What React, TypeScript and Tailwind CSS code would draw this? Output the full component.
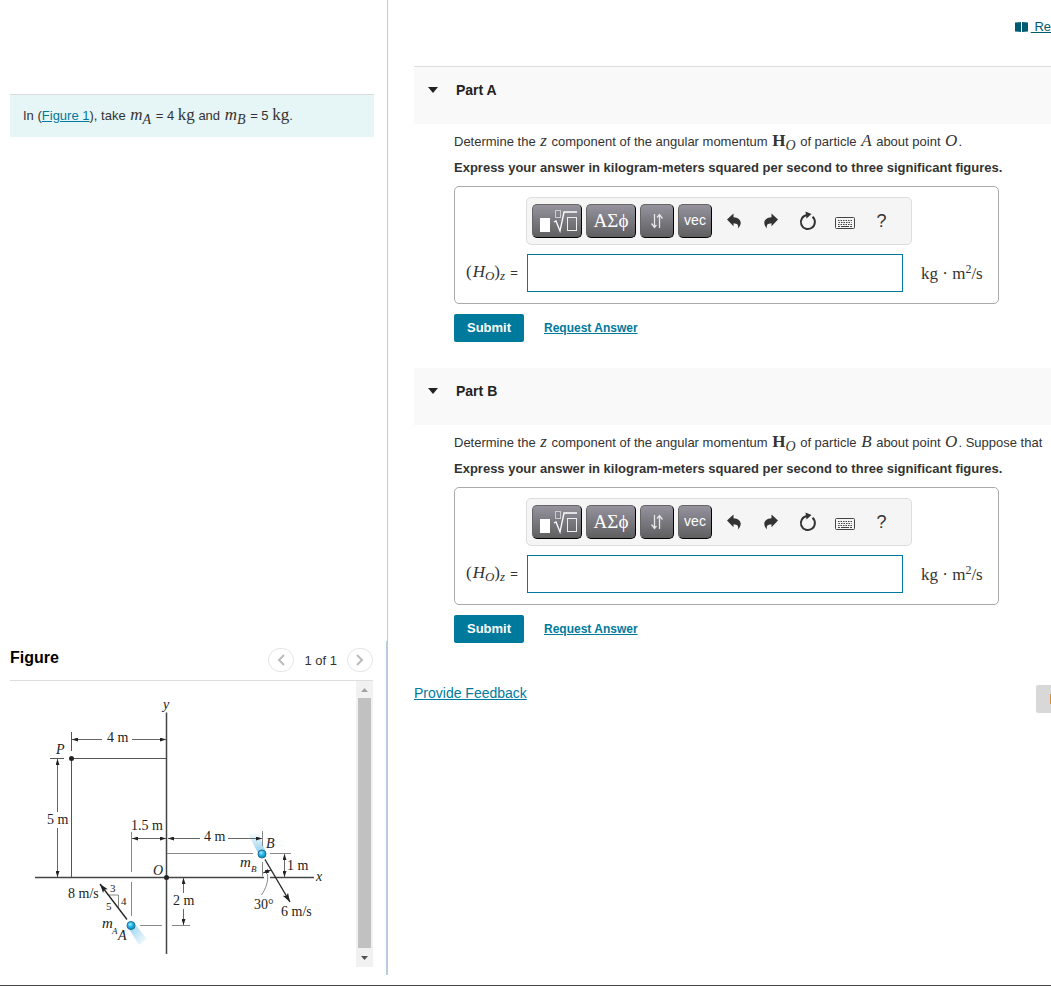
import { ReactNode } from "react";
import clsx from "clsx";

const serif = "font-['Liberation_Serif',serif]";

function Sym({ children, sub, bold }: { children: ReactNode; sub?: string; bold?: boolean }) {
    return (
        <span className={clsx(serif, "px-px text-[17px] leading-none")}>
            <span className={bold ? "font-bold" : "italic"}>{children}</span>
            {sub && <sub className="bottom-[-4px] text-[14px] italic">{sub}</sub>}
        </span>
    );
}

function TemplateIcon() {
    return (
        <svg width="40" height="26" viewBox="0 0 40 26" fill="none" aria-hidden="true">
            <rect x="3" y="10" width="10" height="14" fill="#fff" />
            <rect x="18.5" y="2.5" width="5" height="7" stroke="#ccc" />
            <path d="M17 14l2-1 4 10 4-19h13" stroke="#fff" strokeWidth="1.3" />
            <rect x="30.5" y="9.5" width="9" height="13" stroke="#eee" />
        </svg>
    );
}

function ArrowsIcon() {
    return (
        <svg width="14" height="18" viewBox="0 0 14 18" fill="none" stroke="#e6e6e6" strokeWidth="1.3" aria-hidden="true">
            <path d="M4.500 2v13M1.500 11.500l3 4 2-2.500M9.500 16V3M7 5.500l2.500-3 3 4" />
        </svg>
    );
}

function UndoIcon({ flip }: { flip?: boolean }) {
    return (
        <svg width="14" height="16" viewBox="0 0 14 16" className={flip ? "-scale-x-100" : ""} fill="#333" aria-hidden="true">
            <path d="M0 6.500L6.500 .5v3.700c4.500.3 7 2.300 7.200 5.300.1 2-.8 4-2.700 6 .7-3.500-.5-5-4.500-5.200v3z" />
        </svg>
    );
}

function ResetIcon() {
    return (
        <svg width="18" height="20" viewBox="0 0 18 20" fill="none" aria-hidden="true">
            <path d="M13.500 5.800A7 7 0 1 1 8 4.100" stroke="#333" strokeWidth="2" />
            <path d="M6.500 .5l6 2.500-5 4.500z" fill="#333" />
        </svg>
    );
}

function KeyboardIcon() {
    return (
        <svg width="20" height="13" viewBox="0 0 20 13" fill="none" stroke="#444" aria-hidden="true">
            <rect x=".5" y=".5" width="19" height="11" rx="1" />
            <path d="M3 3.500h14M3.500 5.500h13M3 7.500h14" strokeDasharray="1.500 1" />
            <path d="M3 9.500h2m1 0h8m1 0h2" />
        </svg>
    );
}

const darkBtn =
    "flex h-[34px] items-center justify-center rounded-[5px] border border-t-[#666] border-l-[#666] border-r-black border-b-black bg-linear-to-b from-[#96939e] to-[#5f5f61] text-white";
const plainBtn = "flex h-[34px] w-[33px] items-center justify-center text-[#333]";

function Toolbar() {
    return (
        <div className="col-span-2 col-start-2 flex h-12 w-[386px] items-center gap-1 rounded-[5px] border border-[#ddd] bg-[#f5f5f5] px-[5px]">
            <button aria-label="Templates" className={clsx(darkBtn, "w-[50px]")}>
                <TemplateIcon />
            </button>
            <button aria-label="Symbols" className={clsx(darkBtn, serif, "w-[50px] text-[19px]")}>
                ΑΣϕ
            </button>
            <button aria-label="Arrows" className={clsx(darkBtn, "w-[34px]")}>
                <ArrowsIcon />
            </button>
            <button className={clsx(darkBtn, "w-[34px] pb-[2px] text-sm")}>vec</button>
            <div className="flex gap-1 pl-px">
                <button aria-label="Undo" className={plainBtn}><UndoIcon /></button>
                <button aria-label="Redo" className={plainBtn}><UndoIcon flip /></button>
                <button aria-label="Reset" className={plainBtn}><ResetIcon /></button>
                <button aria-label="Keyboard" className={clsx(plainBtn, "pt-1")}><KeyboardIcon /></button>
                <button aria-label="Help" className={clsx(plainBtn, "text-lg")}>?</button>
            </div>
        </div>
    );
}

function Part({ name, first, tail }: { name: string; first?: boolean; tail?: string }) {
    const id = "answer-" + name;
    return (
        <section className="mb-[26px]">
            <h2 className={clsx("bg-[#f9f9f9]", first && "border-t border-[#ddd]")}>
                <button className="flex h-[57px] w-full items-start pt-3 pl-[14px] text-left text-sm font-bold text-[#222]">
                    <svg width="10" height="6" viewBox="0 0 10 6" className="mt-2 mr-[18px]" aria-hidden="true">
                        <path d="M0 0h10L5 6z" fill="#222" />
                    </svg>
                    <span className="leading-[22px]">Part {name}</span>
                </button>
            </h2>
            <div className="pl-10 text-[13px]">
                <p className="h-[30px] pt-2 leading-5 whitespace-nowrap">
                    Determine the <Sym>z</Sym> component of the angular momentum <Sym bold sub="O">H</Sym> of particle{" "}
                    <Sym>{name}</Sym> about point <Sym>O</Sym>.{tail}
                </p>
                <p className="h-8 pt-1 leading-5 font-bold whitespace-nowrap">
                    Express your answer in kilogram-meters squared per second to three significant figures.
                </p>
                <div className="grid w-[545px] grid-cols-[71px_377px_1fr] gap-y-[9px] rounded-[5px] border border-[#aaa] pt-[10px] pb-[11px]">
                    <Toolbar />
                    <label htmlFor={id} className={clsx(serif, "pt-2 pl-[11px] text-[17px] leading-5 whitespace-nowrap")}>
                        (<i className="pl-px">H</i>
                        <sub className="bottom-[-3px] text-[13px] italic">O</sub>)
                        <sub className="bottom-[-3px] pr-px text-[13px] italic">z</sub>{" "}
                        <span className="font-['Liberation_Sans',sans-serif] text-[13px]">=</span>
                    </label>
                    <input id={id} type="text" className="ml-px h-[38px] border border-[#007a9c] bg-white px-2 outline-none" />
                    <span className={clsx(serif, "pt-[10px] pl-[18px] text-[17px] leading-5")}>
                        kg · m<sup className="-top-[6px] text-[12px]">2</sup>/s
                    </span>
                </div>
                <div className="mt-[10px] flex items-center gap-5">
                    <button className="h-7 w-[70px] rounded-[2px] bg-[#007a9c] text-[13px] font-bold text-white">Submit</button>
                    <a href="#" className="text-xs font-bold text-[#007a9c] underline">Request Answer</a>
                </div>
            </div>
        </section>
    );
}

function Diagram() {
    return (
        <svg viewBox="10 681 346 286" className={clsx(serif, "h-[286px] w-[346px] text-[14px]")} role="img" aria-label="Particles A and B">
            <defs>
                <marker id="tip" viewBox="0 0 6 4" refX="6" refY="2" markerWidth="6" markerHeight="4" orient="auto-start-reverse" markerUnits="userSpaceOnUse">
                    <path d="M0 0l6 2-6 2z" fill="#222" />
                </marker>
                <marker id="bigTip" viewBox="0 0 9 6" refX="9" refY="3" markerWidth="9" markerHeight="7" orient="auto" markerUnits="userSpaceOnUse">
                    <path d="M0 0l9 3-9 3 2-3z" fill="#222" />
                </marker>
                <linearGradient id="trailB" x1="0" y1="1" x2="0" y2="0">
                    <stop stopColor="#8fd0ee" />
                    <stop offset="1" stopColor="#fff" />
                </linearGradient>
                <linearGradient id="trailA" x1="0" y1="0" x2="1" y2="1">
                    <stop stopColor="#8fd0ee" />
                    <stop offset="1" stopColor="#fff" />
                </linearGradient>
                <radialGradient id="ball" cx=".4" cy=".35">
                    <stop stopColor="#a8eafd" />
                    <stop offset=".6" stopColor="#2cb8ea" />
                    <stop offset="1" stopColor="#129bd0" />
                </radialGradient>
            </defs>

            {/* motion trails */}
            <path d="M129 929l5-6 13 16-8 6z" fill="url(#trailA)" />
            <path d="M258 853l7-3-7-18-11 0z" fill="url(#trailB)" />

            {/* axes */}
            <g stroke="#444" strokeWidth="1.500">
                <path d="M166.500 712.500V954M35 877.500H264M270 877.500H314" />
            </g>

            {/* construction lines */}
            <g stroke="#888" strokeWidth="1" fill="none">
                <path d="M71.500 732V751M50 758.500H64M71.500 758.500H166M71.500 758V877" stroke="#555" />
                <path d="M131.500 832V872M131.500 882V916M140 925.500H162M172 925.500H190" />
                <path d="M167 853.500H253M262.500 831V846M262.500 862V876M270 853.500H291" />
                <path d="M108 895H118.500V909" />
                <path d="M267.500 874c1 8-2 15-6 21" />
            </g>

            {/* dimension arrows */}
            <g stroke="#666" strokeWidth="1" fill="none">
                <path d="M102 739.500H72" markerEnd="url(#tip)" />
                <path d="M132 739.500H166" markerEnd="url(#tip)" />
                <path d="M57.500 812V759" markerEnd="url(#tip)" />
                <path d="M57.500 828V877" markerEnd="url(#tip)" />
                <path d="M132 838.500H166" markerStart="url(#tip)" markerEnd="url(#tip)" />
                <path d="M200 838.500H168" markerEnd="url(#tip)" />
                <path d="M228 838.500H262" markerEnd="url(#tip)" />
                <path d="M183.500 893V878" markerEnd="url(#tip)" />
                <path d="M183.500 909V925" markerEnd="url(#tip)" />
                <path d="M284.500 854V877" markerStart="url(#tip)" markerEnd="url(#tip)" />
                <path d="M263 873l8-3" markerStart="url(#tip)" markerEnd="url(#tip)" />
            </g>
            <g stroke="#222" strokeWidth="1.300">
                <path d="M127 919.500L100 884" markerEnd="url(#bigTip)" />
                <path d="M265 859.500L290 902" markerEnd="url(#bigTip)" />
            </g>

            <circle cx="71.500" cy="758.500" r="2.500" fill="#222" />
            <circle cx="166.500" cy="877.500" r="2.500" fill="#222" />
            <circle cx="131" cy="925.500" r="4" fill="url(#ball)" stroke="#1d6f92" />
            <circle cx="262" cy="854" r="4" fill="url(#ball)" stroke="#1d6f92" />

            <g fill="#222">
                <text x="107" y="742">4 m</text>
                <text x="47" y="824">5 m</text>
                <text x="131" y="830">1.5 m</text>
                <text x="204" y="841">4 m</text>
                <text x="287" y="870">1 m</text>
                <text x="173" y="905">2 m</text>
                <text x="68" y="898">8 m/s</text>
                <text x="281" y="916">6 m/s</text>
                <text x="254" y="909">30°</text>
                <g fontSize="11">
                    <text x="110" y="892">3</text>
                    <text x="121" y="905">4</text>
                    <text x="106" y="910">5</text>
                </g>
                <g fontStyle="italic">
                    <text x="163" y="709">y</text>
                    <text x="56" y="754">P</text>
                    <text x="153" y="875">O</text>
                    <text x="316" y="881">x</text>
                    <text x="266" y="848">B</text>
                    <text x="118" y="940">A</text>
                    <text x="102" y="928" fontSize="15">m</text>
                    <text x="112" y="934" fontSize="9">A</text>
                    <text x="240" y="867" fontSize="15">m</text>
                    <text x="251" y="872" fontSize="9">B</text>
                </g>
            </g>
        </svg>
    );
}

function PageButton({ label, d }: { label: string; d: string }) {
    return (
        <button aria-label={label} className="flex h-6 w-[26px] items-center justify-center rounded-full border border-[#e4e4e4]">
            <svg width="8" height="12" viewBox="0 0 8 12" fill="none" stroke="#bbb" strokeWidth="2" aria-hidden="true">
                <path d={d} />
            </svg>
        </button>
    );
}

function FigurePanel() {
    return (
        <section className="h-[334px] border-r-2 border-[#b8cbe0] pr-[13px] pl-[10px]">
            <header className="flex h-10 justify-between border-b border-[#ddd]">
                <h2 className="pt-[5px] text-base font-bold text-black">Figure</h2>
                <div className="flex h-6 items-center gap-[10px] pt-[14px] text-[13px]">
                    <PageButton label="Previous" d="M7 1L2 6l5 5" />
                    <span className="pt-[2px] whitespace-nowrap">1 of 1</span>
                    <PageButton label="Next" d="M1 1l5 5-5 5" />
                </div>
            </header>
            <div className="flex justify-between">
                <Diagram />
                <div className="flex h-[286px] w-[17px] flex-col items-center bg-[#f1f1f1]">
                    <button aria-label="Scroll up" className="flex h-[17px] w-full items-center justify-center">
                        <svg width="7" height="4" viewBox="0 0 7 4"><path d="M0 4h7L3.500 0z" fill="#a3a3a3" /></svg>
                    </button>
                    <div className="w-[13px] flex-1 bg-[#c1c1c1]" />
                    <button aria-label="Scroll down" className="flex h-[19px] w-full items-center justify-center">
                        <svg width="7" height="4" viewBox="0 0 7 4"><path d="M0 0h7L3.500 4z" fill="#505050" /></svg>
                    </button>
                </div>
            </div>
        </section>
    );
}

export default function App() {
    return (
        <div className="flex min-h-screen flex-col overflow-hidden border-b border-[#444] bg-white font-['Liberation_Sans',Arial,sans-serif] text-[#333]">
            <div className="grid flex-1 grid-cols-[388px_minmax(0,1fr)]">
                <aside className="flex flex-col pb-[10px]">
                    <div className="flex-1 border-r border-[#ccc] pt-[94px] pr-[13px] pl-[10px]">
                        <p className="h-[43px] border-t border-[#ddd] bg-[#e6f5f5] pt-[11px] pl-[13px] text-[13px] leading-5">
                            In (<a href="#" className="text-[#007a9c] underline">Figure 1</a>), take <Sym sub="A">m</Sym> = 4{" "}
                            <span className={clsx(serif, "text-[17px] leading-none")}>kg</span> and <Sym sub="B">m</Sym> = 5{" "}
                            <span className={clsx(serif, "text-[17px] leading-none")}>kg</span>.
                        </p>
                    </div>
                    <FigurePanel />
                </aside>
                <main className="pl-[26px]">
                    <header className="flex h-[66px] justify-end pt-[17px]">
                        <a href="#" className="flex items-center gap-[3px] self-start text-[13px] leading-5 whitespace-pre text-[#005a70] underline">
                            <svg width="13" height="10" viewBox="0 0 13 10" aria-hidden="true">
                                <path d="M0 .5l6-.5v10l-6-.5zM7 0l6 .5v9L7 10z" fill="#005a70" />
                            </svg>
                            <span>{" Re"}</span>
                        </a>
                    </header>
                    <Part name="A" first />
                    <Part name="B" tail=" Suppose that" />
                    <footer className="flex items-start justify-between pt-[16px]">
                        <a href="#" className="text-sm leading-4 text-[#007a9c] underline">Provide Feedback</a>
                        <button aria-label="Next" className="flex h-7 w-[15px] items-center justify-end rounded-l-[2px] bg-[#d8d8d8]">
                            <span className="h-[10px] w-px bg-[#d68f35]" />
                        </button>
                    </footer>
                </main>
            </div>
        </div>
    );
}
